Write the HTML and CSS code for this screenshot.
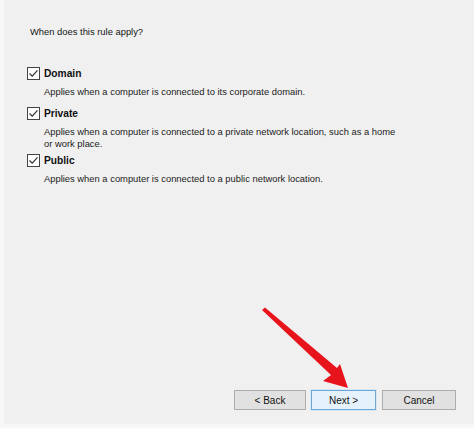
FILE: index.html
```html
<!DOCTYPE html>
<html lang="en">
<head>
    <meta charset="UTF-8">
    <meta name="viewport" content="width=device-width, initial-scale=1.0">
    <title>New Inbound Rule Wizard - Profile</title>
    <link rel="stylesheet" href="styles.css">
</head>
<body>
    <div class="wizard">
        <main class="wizard-body">
            <p class="question">When does this rule apply?</p>

            <ul class="profiles">
                <li class="profile">
                    <label class="profile-title">
                        <svg class="check" width="13" height="13" viewBox="0 0 13 13">
                            <rect x="0.5" y="0.5" width="12" height="12" fill="#fff" stroke="#444"/>
                            <path d="M2.5 6.5 L5.2 9.2 L10.5 3.3" fill="none" stroke="#333" stroke-width="1.2"/>
                        </svg>
                        Domain
                    </label>
                    <p class="profile-desc">Applies when a computer is connected to its corporate domain.</p>
                </li>
                <li class="profile profile-private">
                    <label class="profile-title">
                        <svg class="check" width="13" height="13" viewBox="0 0 13 13">
                            <rect x="0.5" y="0.5" width="12" height="12" fill="#fff" stroke="#444"/>
                            <path d="M2.5 6.5 L5.2 9.2 L10.5 3.3" fill="none" stroke="#333" stroke-width="1.2"/>
                        </svg>
                        Private
                    </label>
                    <p class="profile-desc">Applies when a computer is connected to a private network location, such as a home<br>or work place.</p>
                </li>
                <li class="profile profile-public">
                    <label class="profile-title">
                        <svg class="check" width="13" height="13" viewBox="0 0 13 13">
                            <rect x="0.5" y="0.5" width="12" height="12" fill="#fff" stroke="#444"/>
                            <path d="M2.5 6.5 L5.2 9.2 L10.5 3.3" fill="none" stroke="#333" stroke-width="1.2"/>
                        </svg>
                        Public
                    </label>
                    <p class="profile-desc">Applies when a computer is connected to a public network location.</p>
                </li>
            </ul>
        </main>

        <footer class="buttons">
            <button class="btn btn-back">&lt; Back</button>
            <button class="btn btn-next">Next &gt;</button>
            <button class="btn btn-cancel">Cancel</button>
        </footer>

        <!-- Красная стрелка на кнопку "Next" -->
        <svg class="pointer" width="474" height="428" viewBox="0 0 474 428">
            <path d="M262 310 L265 307.5 L337 368 L340 364 L348 388 L323 381 L331 375 Z" fill="#e8141b"/>
        </svg>
    </div>
</body>
</html>
```

FILE: styles.css
```css
* {
    margin: 0;
    padding: 0;
    box-sizing: border-box;
}

body {
    background: #f7f7f7;
    font-family: 'Liberation Sans', Arial, sans-serif;
    font-size: 9.4px;
    color: #151515;
}

.wizard {
    position: relative;
    display: flex;
    flex-direction: column;
    height: 424px;
    margin: 0 0 4px 4px;
    background: #f0f0f0;
}

.wizard-body {
    flex: 1;
    padding: 25px 0 0 23px;
}

.question {
    line-height: 13px;
    margin-left: 3px;
}

.profiles {
    list-style: none;
    margin-top: 28px;
}

.profile-title {
    display: flex;
    align-items: center;
    gap: 4px;
    height: 14px;
    font-weight: bold;
    font-size: 10.2px;
    color: #111;
}

.check {
    display: block;
}

.profile-desc {
    margin: 5.5px 0 0 17px;
    line-height: 11.5px;
    color: #222;
}

.profile-private {
    margin-top: 9.5px;
}

.profile-public {
    margin-top: 4.5px;
}

/* Кнопки мастера */
.buttons {
    display: flex;
    justify-content: flex-end;
    gap: 5px;
    padding: 0 18px 14px 0;
}

.btn {
    height: 20px;
    font-family: inherit;
    font-size: 10px;
    color: #111;
    background: #e1e1e1;
    border: 1px solid #adadad;
}

.btn-back {
    width: 72px;
}

.btn-next {
    width: 65px;
    background: #e5f1fb;
    border-color: #6ea6d6;
    box-shadow: 0 0 0 1px #d6e8f6;
}

.btn-cancel {
    width: 74px;
    margin-left: 1px;
}

.pointer {
    position: absolute;
    left: -4px;
    top: 0;
    pointer-events: none;
}
```
